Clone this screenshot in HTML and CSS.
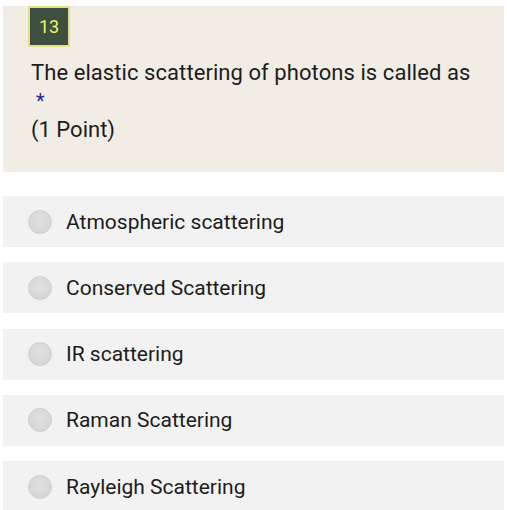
FILE: index.html
```html
<!DOCTYPE html>
<html>
<head>
<meta charset="utf-8">
<link rel="stylesheet" href="styles.css">
</head>
<body>
<div class="page">
  <div class="question">
    <div class="badge">13</div>
    <div class="qtext">The elastic scattering of photons is called as</div>
    <div class="req">*</div>
    <div class="points">(1 Point)</div>
  </div>
  <div class="options">
    <div class="option"><span class="radio"></span><span class="label">Atmospheric scattering</span></div>
    <div class="option"><span class="radio"></span><span class="label">Conserved Scattering</span></div>
    <div class="option"><span class="radio"></span><span class="label">IR scattering</span></div>
    <div class="option"><span class="radio"></span><span class="label">Raman Scattering</span></div>
    <div class="option"><span class="radio"></span><span class="label">Rayleigh Scattering</span></div>
  </div>
</div>
</body>
</html>
```
FILE: styles.css
```css
html, body {
  margin: 0;
  padding: 0;
  background: #ffffff;
}
body {
  font-family: Roboto, "Liberation Sans", sans-serif;
  color: #1c1c1c;
}
.page {
  padding: 6px 3px 0 3px;
}
.question {
  background: #f1ede5;
  height: 166px;
  box-sizing: border-box;
  padding-left: 28px;
}
.badge {
  width: 42px;
  height: 41px;
  box-sizing: border-box;
  margin-left: -3px;
  background: #3d4f3f;
  border: 2px solid #e4df8c;
  color: #f4ee62;
  font-size: 18px;
  display: flex;
  align-items: center;
  justify-content: center;
}
.qtext, .req, .points {
  font-size: 22px;
  line-height: 28px;
}
.qtext {
  margin-top: 12px;
  letter-spacing: 0.07px;
}
.req {
  color: #232a8a;
  padding-left: 5px;
  font-size: 20px;
}
.points {
  margin-top: 1px;
}
.options {
  margin-top: 24px;
  display: flex;
  flex-direction: column;
  gap: 15.25px;
}
.option {
  background: #f2f2f2;
  height: 51px;
  display: flex;
  align-items: center;
  padding-left: 25px;
}
.radio {
  width: 24px;
  height: 24px;
  border-radius: 50%;
  box-sizing: border-box;
  border: 1px solid #cfcfcf;
  background: radial-gradient(circle at 50% 40%, #e2e2e2 0%, #d6d6d6 70%, #cbcbcb 100%);
  flex: none;
}
.label {
  margin-left: 14px;
  font-size: 21px;
  color: #1c1c1c;
}
```
